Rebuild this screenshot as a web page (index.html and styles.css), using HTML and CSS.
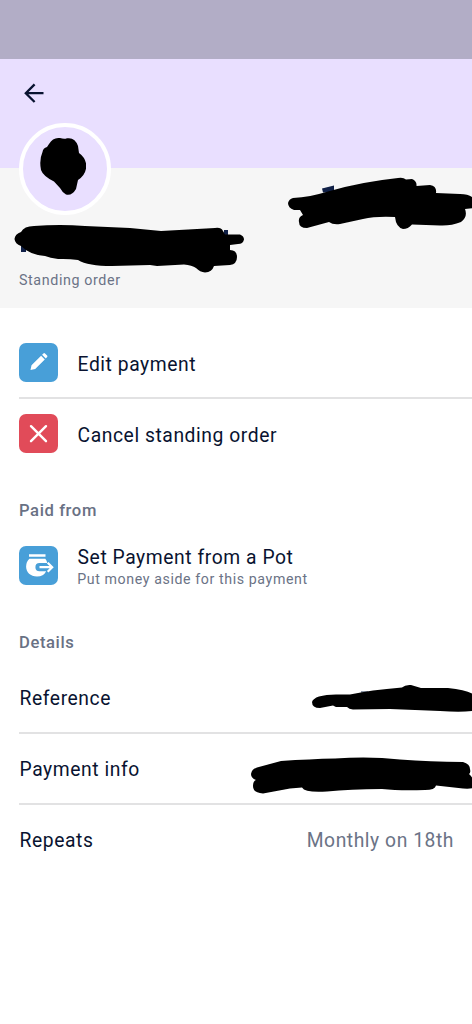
FILE: index.html
```html
<!DOCTYPE html>
<html lang="en">
<head>
<meta charset="utf-8">
<meta name="viewport" content="width=device-width, initial-scale=1">
<title>Standing order</title>
<link rel="stylesheet" href="styles.css">
</head>
<body>
<div class="screen">
  <div class="status-bar"></div>
  <header class="banner">
    <svg class="back" width="20" height="20" viewBox="0 0 20 20"><path d="M19.500 10.200H2M10.600 1.400 1.800 10.200l8.800 8.800"/></svg>
    <div class="avatar">
      <svg width="46" height="58" viewBox="40 137 46 58"><path d="M49 144Q53 137 60 138Q64 139.500 67 138.300Q75 137 78 146L79 153Q86 158 86.300 166Q86 175 78 180L76 189Q72 196 66 194.500Q62 192 60 188L54 181.500Q43 176 41 170Q39 160 42.500 152Q43 148 47 147Z"/></svg>
    </div>
  </header>
  <section class="summary">
    <div class="summary-top">
      <svg class="name" width="230" height="48" viewBox="15 225 230 48"><path class="ink" d="M21 245h5v7h-5zM224 230h4v6h-4z"/><path d="M21 232Q24 226 34 226Q60 224 85 226L130 228L161 231L215 228Q221 227 223 231L225 234.500H240Q244 236 244 239.500Q243 244 238 244L230 245V250Q237 250 237 257Q237 264 230 265L214 266Q212 272 205 272.500Q200 272 196 268Q192 265 184 264.500L157 266L150 265L112 266Q88 266 78 260Q68 258.500 58 259Q50 258 45 256Q30 255 21 246Q15 244 14.500 239Q15 234 21 232Z"/></svg>
      <svg class="amount" width="184" height="52" viewBox="288 177 184 52"><path class="ink" d="M322 188.500l12-3v7h-11z"/><path d="M293 198Q310 197 328 191.500Q360 182 398 178Q403 177 406 179.500L412 179Q417 181 416.500 186L430 185Q437 186 436 193L460 194Q469 194 473 198V208L465 209Q468 217 461 222Q451 226 440 225.500L412 224.500Q408 229 403 229Q396 227 395 217Q376 216 363 219L340 224Q333 225 329 222L307 228Q299 228 299 222Q298 217 303 215L300 210H294Q288 208 288 203Q289 199 293 198Z"/></svg>
    </div>
    <p class="kind">Standing order</p>
  </section>
  <main class="content">
    <div class="row ruled first">
      <svg class="tile blue" width="39" height="39" viewBox="0 0 39 39"><path class="solid" d="M11.500 27l1-4.700L22.100 12.700l3.700 3.700L16.200 26zM23.100 11.700l1.300-1.300q.8-.8 1.600 0l2.100 2.100q.8.800 0 1.600l-1.300 1.300z"/></svg>
      <span class="label">Edit payment</span>
    </div>
    <div class="row cancel">
      <svg class="tile red" width="39" height="39" viewBox="0 0 39 39"><path class="line cross" d="M12 12.200 27 27.200M27 12.200 12 27.200"/></svg>
      <span class="label">Cancel standing order</span>
    </div>
    <h2 class="heading">Paid from</h2>
    <div class="row pot">
      <svg class="tile blue" width="39" height="39" viewBox="0 0 39 39"><path class="solid" d="M10 8.300h16.500v2.500H10zM10.300 12.700h16q1.300 1.300 2 4.400H20.500a4.100 4.100 0 0 0 0 8.200h6.700Q24.500 30.600 18 30.600C11.500 30.600 7.100 26.300 7.100 20.600Q7.100 15.800 10.300 12.700Z"/><path class="line" d="M20.500 21.200H33M28.700 16.700l4.500 4.500-4.500 4.500"/></svg>
      <div class="text"><span class="label">Set Payment from a Pot</span><span class="note">Put money aside for this payment</span></div>
    </div>
    <h2 class="heading details">Details</h2>
    <div class="row ruled">
      <span class="label key">Reference</span>
      <svg class="mark" width="160" height="28" viewBox="312 684 160 28"><path class="ink pale" d="M361 691h7v3h-7z"/><path d="M319 696.500Q326 694.500 336 694.500H350Q370 690 402 687.500Q405 684.500 411 685L421 688H448Q466 690 473 694V711Q460 712.500 440 711L390 709L353 709.500Q349 709 347 707H336L333 705.500L320 708Q312 708 312 702Q313 698.500 319 696.500Z"/></svg>
    </div>
    <div class="row ruled">
      <span class="label key">Payment info</span>
      <svg class="mark info" width="222" height="37" viewBox="250 757 222 37"><path d="M257 767.500L281 761Q310 759 335 758.500Q370 756 400 759.500Q430 761.500 463 762Q470 764 470 769Q471 773 469 774Q473 777 473 782V788Q470 789 463 788.500L436 785.500Q435 790 425 790Q400 791 382 789Q350 789 327 791.500Q305 793 302 787.500L290 788.500L263 793.500Q253 793 253 786Q253 781 256 780Q251 778 251 774Q252 769 257 767.500Z"/></svg>
    </div>
    <div class="row last">
      <span class="label key">Repeats</span>
      <span class="value">Monthly on 18th</span>
    </div>
  </main>
</div>
</body>
</html>
```
FILE: styles.css
```css
* { box-sizing: border-box; }
body {
  margin: 0;
  background: #fff;
  color: #091330;
  font-family: Roboto, "Liberation Sans", sans-serif;
}
svg { display: block; flex: none; }
.screen { width: 472px; height: 1024px; overflow: hidden; background: #fff; }
.status-bar { height: 59px; background: #b2adc6; }
.banner { position: relative; height: 109px; padding: 24px; background: #e9dfff; }
.back, .line { fill: none; stroke: #091330; stroke-width: 2.3; }
.avatar {
  position: absolute;
  left: 19px;
  top: 64px;
  width: 92px;
  height: 92px;
  padding: 10px 0 0 17px;
  border: 4px solid #fff;
  border-radius: 50%;
  background: #e9dfff;
}
.summary { height: 140px; background: #f6f6f6; }
.summary-top { display: flex; height: 104px; padding-left: 15px; }
.name { margin-top: 57px; overflow: visible; }
.amount { margin: 9px 0 0 auto; }
.ink { fill: #102047; }
.pale { fill: #8e98a9; }
.kind { margin: 0 0 0 19px; color: #6b7386; font-size: 14.3px; line-height: 17px; letter-spacing: .6px; }
.content { padding: 19px 0 0 19px; }
.row { display: flex; align-items: center; height: 71px; }
.ruled { height: 71.5px; border-bottom: 2px solid #e2e2e3; }
.first { height: 72px; padding-top: 1px; }
.cancel { height: 70px; padding-bottom: 1px; }
.tile { margin-right: 19.6px; border-radius: 7px; }
.blue { background: #489fd8; }
.red { background: #e14b59; }
.solid { fill: #fff; }
.line { stroke: #fff; stroke-width: 2.2; }
.line.cross { stroke-width: 2.4; stroke-linecap: round; }
.label { padding-top: 4px; font-size: 19.3px; line-height: 24px; letter-spacing: .56px; }
.key { padding-left: .6px; }
.heading { margin: 32px 0 9px; color: #697184; font-size: 16.6px; font-weight: 500; line-height: 20px; letter-spacing: .6px; }
.text { display: flex; flex-direction: column; padding-top: 4px; }
.text .label { padding: 0; line-height: 23px; }
.note { margin-left: -.4px; color: #6b7386; font-size: 14.2px; line-height: 21px; letter-spacing: .6px; }
.details { margin: 32px 0 9px; }
.mark { margin: 2px 0 0 auto; }
.mark.info { margin-top: 14px; }
.last { height: 70px; }
.last .label { padding-top: 2px; }
.value { margin-left: auto; padding: 2px 18px 0 0; color: #6b7386; font-size: 19.3px; line-height: 24px; letter-spacing: .55px; }
```
